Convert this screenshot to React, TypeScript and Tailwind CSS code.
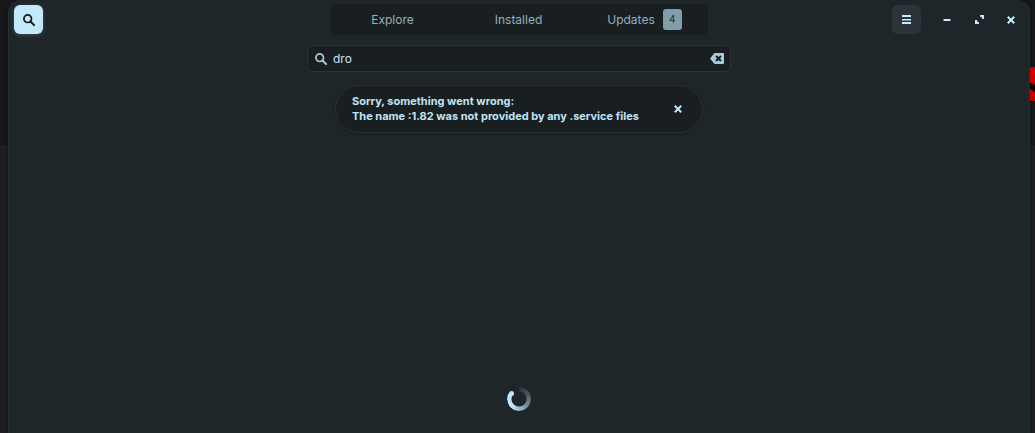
import { useState } from "react";
import type { ReactNode } from "react";

const TABS = [
  { name: "Explore", count: 0 },
  { name: "Installed", count: 0 },
  { name: "Updates", count: 4 },
];

function SearchIcon({ size }: { size: number }) {
  return (
    <svg width={size} height={size} viewBox="0 0 12 12" fill="none" stroke="currentColor" aria-hidden="true">
      <circle cx="4.7" cy="4.7" r="3.8" strokeWidth="1.7" />
      <path d="M7.5 7.5l3.6 3.6" strokeWidth="2" strokeLinecap="round" />
    </svg>
  );
}

function CloseIcon() {
  return (
    <svg width="8" height="8" viewBox="0 0 8 8" stroke="currentColor" strokeWidth="2" aria-hidden="true">
      <path d="M0.8 0.8l6.4 6.4M7.2 0.8L0.8 7.2" />
    </svg>
  );
}

function WindowButton({ label, children }: { label: string; children: ReactNode }) {
  return (
    <button aria-label={label} className="flex size-6 items-center justify-center text-[#c8ebfc]">
      {children}
    </button>
  );
}

function Header() {
  const [active, setActive] = useState("");

  return (
    <header className="grid grid-cols-[1fr_auto_1fr] items-center pt-1 pr-1.5 pl-[5px]">
      <button
        aria-label="Search"
        className="flex size-[29px] items-center justify-center rounded-md bg-[#c2e8fb] text-[#10171a] shadow-[0_1px_4px_rgba(194,232,251,0.2)]"
      >
        <SearchIcon size={12} />
      </button>
      <nav className="grid h-[31px] w-[378px] grid-cols-3 rounded-md bg-[#191e21] text-[12px] text-[#91b0be]">
        {TABS.map((tab) => (
          <button
            key={tab.name}
            aria-pressed={active === tab.name}
            onClick={() => setActive(tab.name)}
            className="flex items-center justify-center gap-2"
          >
            {tab.name}
            {tab.count > 0 && (
              <span className="flex h-[21px] w-[19px] items-center justify-center rounded-[3px] bg-[#819eab] text-[10px] text-[#1f2a2f]">
                {tab.count}
              </span>
            )}
          </button>
        ))}
      </nav>
      <div className="flex items-center justify-end gap-2">
        <button
          aria-label="Menu"
          className="mr-1.5 flex size-[29px] items-center justify-center rounded-md bg-[#2b3439] text-[#c8ebfc]"
        >
          <svg width="9" height="9" viewBox="0 0 9 9" fill="currentColor" aria-hidden="true">
            <path d="M0 0h9v2H0zM0 4h9v1.5H0zM0 7h9v2H0z" />
          </svg>
        </button>
        <WindowButton label="Minimize">
          <svg width="8" height="8" viewBox="0 0 8 8" fill="currentColor" aria-hidden="true">
            <path d="M0.5 3h7v2h-7z" />
          </svg>
        </WindowButton>
        <WindowButton label="Maximize">
          <svg width="9" height="9" viewBox="0 0 9 9" fill="currentColor" aria-hidden="true">
            <path d="M5 0h4v4H7.2V3L6 1.8H5zM0 5h1.8L3 7.2H4V9H0z" />
          </svg>
        </WindowButton>
        <WindowButton label="Close">
          <CloseIcon />
        </WindowButton>
      </div>
    </header>
  );
}

function SearchEntry() {
  const [query, setQuery] = useState("dro");

  return (
    <div className="mt-2.5 flex h-[27px] w-full max-w-[424px] items-center gap-1.5 rounded-md border border-[#2c3235] bg-[#191e21] pr-1.5 pl-[7px] text-[#a9cbdb]">
      <SearchIcon size={12} />
      <input
        aria-label="Search applications"
        value={query}
        onChange={(e) => setQuery(e.target.value)}
        className="min-w-0 flex-1 bg-transparent text-[12px] text-[#c0e5f6] outline-none"
      />
      <button aria-label="Clear" onClick={() => setQuery("")}>
        <svg width="14" height="11" viewBox="0 0 14 11" aria-hidden="true">
          <path d="M4.5 0H13q1 0 1 1v9q0 1-1 1H4.5L0 5.5z" fill="#a9cbdb" />
          <path d="M6 3l5 5M11 3L6 8" stroke="#191e21" strokeWidth="2" />
        </svg>
      </button>
    </div>
  );
}

function Toast({ onClose }: { onClose: () => void }) {
  return (
    <div
      role="alert"
      className="mt-[13px] flex w-[368px] items-center justify-between rounded-full border border-[#2a3033] bg-[#191e21] py-2 pr-3 pl-4 text-[#c0e5f6] shadow-[0_1px_4px_rgba(0,0,0,0.25)]"
    >
      <p className="text-[11px] leading-[15px] font-bold whitespace-nowrap">
        Sorry, something went wrong:
        <br />
        The name :1.82 was not provided by any .service files
      </p>
      <button aria-label="Dismiss" onClick={onClose} className="flex size-6 items-center justify-center">
        <CloseIcon />
      </button>
    </div>
  );
}

function Spinner() {
  return (
    <div role="status" aria-label="Loading" className="relative size-6">
      <div className="size-6 rounded-full bg-[conic-gradient(#c0e5f610_0deg,#c0e5f640_60deg,#c0e5f6a0_150deg,#c0e5f6_220deg,#c0e5f6_300deg,transparent_301deg)] [mask-image:radial-gradient(circle,transparent_7px,#000_8px)]" />
      <div className="absolute top-1 left-0.5 size-[5px] rounded-full bg-[#c0e5f6]" />
    </div>
  );
}

export default function App() {
  const [toastOpen, setToastOpen] = useState(true);

  return (
    <div className="flex min-h-screen bg-[linear-gradient(#17181a_145px,#1e1f21_145px)] font-['Inter',sans-serif]">
      <div className="w-2 shrink-0" />
      <main className="flex min-w-0 flex-1 flex-col rounded-t-xl border-x border-[#283033] bg-[#1f2629] shadow-[0_0_4px_rgba(0,0,0,0.5)]">
        <Header />
        <div className="flex flex-1 flex-col items-center">
          <SearchEntry />
          {toastOpen && <Toast onClose={() => setToastOpen(false)} />}
          <div className="mt-auto pb-[22px]">
            <Spinner />
          </div>
        </div>
      </main>
      <div className="w-[5px] shrink-0 pt-[67px]">
        <svg width="5" height="35" viewBox="0 0 5 35" aria-hidden="true">
          <path d="M0 0h5v35H0z" fill="#000" />
          <path d="M0 1l1-1h4v18L0 15.5zM0 22l5 3v9H1l-1-1z" fill="#c90000" />
        </svg>
      </div>
    </div>
  );
}
